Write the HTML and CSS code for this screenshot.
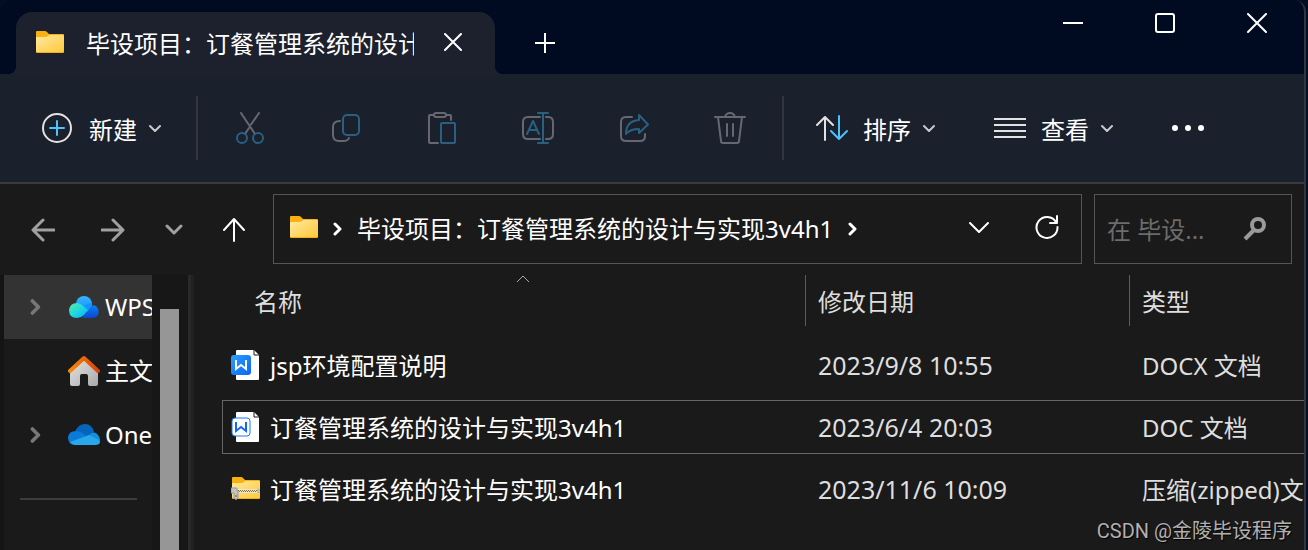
FILE: index.html
```html
<!DOCTYPE html>
<html lang="zh-CN">
<head>
<meta charset="utf-8">
<title>毕设项目：订餐管理系统的设计与实现3v4h1</title>
<link rel="stylesheet" href="styles.css">
</head>
<body>
<svg class="defs" aria-hidden="true">
  <defs>
    <linearGradient id="folder-front" x1="0" y1="0" x2="1" y2="1"><stop offset="0" stop-color="#ffe9a0"/><stop offset="1" stop-color="#ffc83a"/></linearGradient>
    <linearGradient id="blue" x1="0" y1="0" x2="1" y2="1"><stop offset="0" stop-color="#2ca0ff"/><stop offset="1" stop-color="#0a64f5"/></linearGradient>
    <linearGradient id="sky" x1="0" y1="0" x2="0" y2="1"><stop offset="0" stop-color="#35b4ff"/><stop offset="1" stop-color="#1590ff"/></linearGradient>
    <linearGradient id="deep" x1="0" y1="0" x2="0" y2="1"><stop offset="0" stop-color="#0a80f8"/><stop offset="1" stop-color="#0a48cc"/></linearGradient>
    <linearGradient id="teal" x1="0" y1="0" x2="1" y2="1"><stop offset="0" stop-color="#55f0a0"/><stop offset="0.500" stop-color="#20d8e0"/><stop offset="1" stop-color="#05a8ff"/></linearGradient>
    <linearGradient id="roof" x1="0" y1="0" x2="1" y2="0"><stop offset="0" stop-color="#f98a0c"/><stop offset="1" stop-color="#d84305"/></linearGradient>
    <linearGradient id="wall" x1="0" y1="0" x2="1" y2="1"><stop offset="0" stop-color="#e4e4e4"/><stop offset="1" stop-color="#a8a8a8"/></linearGradient>
    <symbol id="folder" viewBox="0 0 28 22"><path fill="#f9b011" d="M0 1Q0 0 1 0H9Q10 0 11 1L13 3H27Q28 3 28 4V21Q28 22 27 22H1Q0 22 0 21Z"/><path fill="url(#folder-front)" d="M0 7Q0 6 1 6H9Q11 6 12 5L13 4H27Q28 4 28 5V20Q28 21 27 21H1Q0 21 0 20Z"/></symbol>
    <symbol id="chev-down" viewBox="0 0 12 8"><path d="M1 2L6 7L11 2"/></symbol>
    <symbol id="chev-right" viewBox="0 0 10 14"><path d="M2 2L7 7L2 12"/></symbol>
  </defs>
</svg>
<div class="window">
  <header class="titlebar">
    <div class="tab">
      <svg class="folder"><use href="#folder"/></svg>
      <span class="tab-title">毕设项目：订餐管理系统的设计与实现3v4h1</span>
      <button class="plain" aria-label="关闭标签页"><svg class="ico white" width="18" height="18"><path d="M1 1L17 17M17 1L1 17"/></svg></button>
    </div>
    <button class="plain new-tab" aria-label="新标签页"><svg class="ico white" width="20" height="20"><path d="M0 10H20M10 0V20"/></svg></button>
    <div class="controls">
      <button class="plain" aria-label="最小化"><svg class="ico white" width="20" height="20"><path d="M0 10H20"/></svg></button>
      <button class="plain" aria-label="最大化"><svg class="ico white" width="20" height="20"><rect x="1" y="1" width="18" height="18" rx="2"/></svg></button>
      <button class="plain" aria-label="关闭"><svg class="ico white" width="20" height="20"><path d="M1 1L19 19M19 1L1 19"/></svg></button>
    </div>
  </header>

  <div class="toolbar">
    <button class="plain command new"><svg class="ico light" width="30" height="30"><circle cx="15" cy="15" r="14"/><path class="cyan" d="M8 15H22M15 8V22"/></svg><span>新建</span><svg class="ico light chev"><use href="#chev-down"/></svg></button>
    <span class="rule"></span>
    <div class="tools">
      <button class="plain" aria-label="剪切"><svg class="ico dim" width="32" height="32"><path d="M7 1L21 22M25 1L17 12.500M15 16L11 22"/><circle class="dimblue" cx="8" cy="26" r="5"/><circle class="dimblue" cx="24" cy="26" r="5"/></svg></button>
      <button class="plain" aria-label="复制"><svg class="ico dim" width="32" height="32"><path d="M10 9Q3 9 3 15V23Q3 29 9 29H13Q18 29 19 26"/><rect class="dimblue" x="13" y="3" width="16" height="20" rx="4"/></svg></button>
      <button class="plain" aria-label="粘贴"><svg class="ico dim" width="32" height="32"><path d="M8 3H4Q3 3 3 4V30Q3 31 4 31H12M20 3H24Q25 3 25 4V8"/><rect x="8" y="1" width="12" height="4" rx="2"/><rect class="dimblue" x="15" y="11" width="14" height="20" rx="1"/></svg></button>
      <button class="plain" aria-label="重命名"><svg class="ico dim" width="32" height="32"><path d="M18 5H6Q1 5 1 10V22Q1 27 6 27H18M24 5H26Q31 5 31 10V22Q31 27 26 27H24"/><path class="dimblue" d="M16 1H26M21 1V31M16 31H26M5 22L11 9L17 22M7 18H15"/></svg></button>
      <button class="plain" aria-label="共享"><svg class="ico dim" width="32" height="32"><path d="M14 5H8Q3 5 3 10V24Q3 29 8 29H22Q27 29 27 24V22"/><path class="dimblue" d="M21 3L30 12.500L21 21V17Q12 17 8 22Q8 9 21 8Z"/></svg></button>
      <button class="plain" aria-label="删除"><svg class="ico dim" width="32" height="32"><path d="M1 5H31M4 5L7 29Q7 31 9 31H23Q25 31 25 29L28 5M11 5Q12 1 16 1T21 5M13 12V24M19 12V24"/></svg></button>
    </div>
    <span class="rule"></span>
    <button class="plain command sort"><svg class="ico light" width="32" height="26"><path d="M1 10L9 2L17 10M9 2V25"/><path class="cyan" d="M15 16L23 24L31 16M23 24V1"/></svg><span>排序</span><svg class="ico light chev"><use href="#chev-down"/></svg></button>
    <button class="plain command view"><svg class="ico light" width="32" height="20"><path d="M0 1H32M0 7H32M0 13H32M0 19H32"/></svg><span>查看</span><svg class="ico light chev"><use href="#chev-down"/></svg></button>
    <button class="plain more" aria-label="更多"><svg width="32" height="6" fill="#fff"><circle cx="3" cy="3" r="3"/><circle cx="16" cy="3" r="3"/><circle cx="29" cy="3" r="3"/></svg></button>
  </div>

  <nav class="navbar">
    <div class="history">
      <button class="plain back" aria-label="后退"><svg class="ico gray" width="24" height="24"><path d="M2 12H23M12 2L2 12L12 22"/></svg></button>
      <button class="plain" aria-label="前进"><svg class="ico gray" width="24" height="24"><path d="M1 12H22M12 2L22 12L12 22"/></svg></button>
      <button class="plain" aria-label="最近的位置"><svg class="ico gray" width="18" height="12"><path d="M2 2L9 9L16 2"/></svg></button>
      <button class="plain" aria-label="上移"><svg class="ico white" width="22" height="24"><path d="M11 1V23M1 12L11 1L21 12"/></svg></button>
    </div>
    <div class="address">
      <svg class="folder"><use href="#folder"/></svg>
      <svg class="ico white crumb"><use href="#chev-right"/></svg>
      <span class="path">毕设项目：订餐管理系统的设计与实现3v4h1</span>
      <svg class="ico white crumb"><use href="#chev-right"/></svg>
      <button class="plain drop" aria-label="历史记录"><svg class="ico white" width="20" height="12"><path d="M1 2L10 11L19 2"/></svg></button>
      <button class="plain refresh" aria-label="刷新"><svg class="ico white" width="24" height="24"><path d="M21 7A10.500 10.500 0 1 0 22.500 12M22 1V8H15"/></svg></button>
    </div>
    <div class="search">
      <input type="text" aria-label="搜索" placeholder="在 毕设...">
      <button class="plain" aria-label="搜索"><svg width="24" height="24" fill="none" stroke="#9a9a9a" stroke-width="4"><circle cx="15" cy="8" r="6"/><path d="M11 13L2 22"/></svg></button>
    </div>
  </nav>

  <div class="content">
    <aside class="sidebar">
      <ul class="tree">
        <li class="selected"><svg class="ico branch"><use href="#chev-right"/></svg><svg width="32" height="32" viewBox="0 0 32 32"><circle cx="16" cy="13" r="8" fill="url(#sky)"/><path fill="url(#deep)" d="M14 27L22 16Q25 13 28 15Q32 19 30 24Q28 27 24 27Z"/><path fill="#1494ff" d="M15 15L22 12L24 14L19 21Z"/><path fill="url(#teal)" d="M9 27Q1 27 1 19Q2 12 9 12Q12 12 15 15L20 19L16 24Q13 27 9 27Z"/></svg><span>WPS云盘</span></li>
        <li><svg class="ico branch"></svg><svg width="32" height="32" viewBox="0 0 32 32"><path fill="url(#wall)" d="M16 5L30 17V29Q30 31 28 31H22Q20 31 20 29V21Q20 19 18 19H14Q12 19 12 21V29Q12 31 10 31H4Q2 31 2 29V17Z"/><path fill="none" stroke="url(#roof)" stroke-width="4" stroke-linejoin="round" stroke-linecap="round" d="M2 16L16 3L30 16"/></svg><span>主文件夹</span></li>
        <li><svg class="ico branch"><use href="#chev-right"/></svg><svg width="32" height="32" viewBox="0 0 32 32"><path fill="#0764bc" d="M7 13Q10 5 17 5Q24 5 26 13L20 20Z"/><path fill="#0a7bd8" d="M6 26Q0 25 0 18Q1 12 8 12Q12 12 20 18L8 26Z"/><path fill="#1490df" d="M20 17Q24 12 28 14Q32 17 32 22Z"/><path fill="#28a8ea" d="M2 23L21 16L31 21Q33 23 31 25Q30 26 27 26H7Q4 26 2 23Z"/></svg><span>OneDrive</span></li>
      </ul>
      <div class="divider"></div>
    </aside>
    <div class="scrollbar"><div class="thumb"></div></div>
    <main class="files">
      <svg class="sort-mark" width="14" height="8"><path d="M1 7L7 1L13 7"/></svg>
      <table>
        <thead><tr><th>名称</th><th>修改日期</th><th>类型</th></tr></thead>
        <tbody>
          <tr><td class="name"><svg width="30" height="32" viewBox="0 0 30 32"><path fill="#fff" d="M5 2Q5 1 6 1H23L28 6V30Q28 31 27 31H6Q5 31 5 30Z"/><path d="M23 1V6H28" fill="none" stroke="#1a1a1a"/><rect y="6" width="20" height="20" rx="3" fill="url(#blue)"/><path d="M5 11V20L10 16L15 20V11" fill="none" stroke="#fff" stroke-width="2"/></svg><span>jsp环境配置说明</span></td><td class="date">2023/9/8 10:55</td><td>DOCX 文档</td></tr>
          <tr class="focused"><td class="name"><svg width="30" height="32" viewBox="0 0 30 32"><path fill="#fff" d="M5 2Q5 1 6 1H23L28 6V30Q28 31 27 31H6Q5 31 5 30Z"/><path d="M23 1V6H28" fill="none" stroke="#1a1a1a"/><rect x="1" y="7" width="18" height="18" rx="3" fill="#fff" stroke="#1677ff"/><path d="M5 11V20L10 16L15 20V11" fill="none" stroke="#1268f5" stroke-width="2"/></svg><span>订餐管理系统的设计与实现3v4h1</span></td><td class="date">2023/6/4 20:03</td><td>DOC 文档</td></tr>
          <tr><td class="name"><svg width="30" height="32" viewBox="0 0 30 32"><svg x="1" y="4" width="28" height="22"><use href="#folder"/></svg><path d="M7 18H28" stroke="#efe6c4" stroke-width="4"/><path d="M7 17.500H26" stroke="#7a7050" stroke-width="1" stroke-dasharray="1 1"/><path d="M8 18.500H26" stroke="#7a7050" stroke-width="1" stroke-dasharray="1 1"/><path d="M0 15H6V18H7V25Q5 28 3 25V20H0Z" fill="#c4c4c4" stroke="#999"/><path d="M5 22V24" stroke="#555"/><rect x="26" y="16" width="3" height="4" fill="#bbb"/></svg><span>订餐管理系统的设计与实现3v4h1</span></td><td class="date">2023/11/6 10:09</td><td>压缩(zipped)文件夹</td></tr>
        </tbody>
      </table>
    </main>
  </div>
</div>
<div class="watermark">CSDN @金陵毕设程序</div>
</body>
</html>
```
FILE: styles.css
```css
* { box-sizing: border-box; }
body {
  margin: 0;
  height: 100vh;
  overflow: hidden;
  background: #040d22;
  color: #fff;
  font: 24px/32px "Noto Sans", "Noto Sans CJK SC", sans-serif;
}
.defs { position: absolute; width: 0; height: 0; }
.window {
  height: 100%;
  margin-right: 2px;
  display: flex;
  flex-direction: column;
  overflow: hidden;
  background: #1a1a1a;
  border-right: 2px solid #2e3642;
  border-radius: 12px 12px 0 0;
}
.plain {
  display: flex;
  align-items: center;
  justify-content: center;
  padding: 0;
  border: 0;
  background: none;
  color: inherit;
  font: inherit;
}
svg { flex: none; display: block; }
.ico { fill: none; stroke-width: 2; stroke-linecap: round; stroke-linejoin: round; }
.white { stroke: #fff; }
.light { stroke: #e2e2e2; }
.gray { stroke: #a0a0a0; stroke-width: 3; }
.dim { stroke: #656871; }
.cyan { stroke: #4cc2ff; }
.dimblue { stroke: #2a5f80; }
.folder { width: 28px; height: 22px; }

.titlebar { flex: none; height: 74px; display: flex; background: #000a21; padding-left: 16px; }
.tab {
  position: relative;
  width: 479px;
  margin-top: 12px;
  padding: 0 33px 2px 20px;
  display: flex;
  align-items: center;
  background: #1c212d;
  border-radius: 16px 16px 0 0;
}
.tab::before, .tab::after { content: ""; position: absolute; bottom: 0; width: 8px; height: 8px; }
.tab::before { right: 100%; background: radial-gradient(circle at 0 0, transparent 8px, #1c212d 8px); }
.tab::after { left: 100%; background: radial-gradient(circle at 100% 0, transparent 8px, #1c212d 8px); }
.tab-title { flex: 1; margin: 4px 30px 0 22px; overflow: hidden; white-space: nowrap; }
.new-tab { width: 100px; padding-top: 12px; }
.controls { margin-left: auto; display: flex; height: 46px; padding-right: 1px; }
.controls button { width: 92px; }

.toolbar { flex: none; height: 110px; display: flex; align-items: center; background: #1b202d; border-bottom: 2px solid #3a3a3a; }
.command span { padding-top: 3px; }
.chev { width: 12px; height: 8px; margin-left: 12px; stroke: #c8c8c8; }
.new { padding: 0 35px 0 42px; }
.new span { margin-left: 17px; }
.rule { flex: none; width: 2px; height: 64px; background: #303541; }
.tools { display: flex; padding: 0 4px; }
.tools button { width: 96px; height: 64px; }
.sort { padding-left: 32px; }
.sort span, .view span { margin-left: 15px; }
.view { padding-left: 59px; }
.more { margin-left: 59px; }

.navbar { flex: none; height: 91px; padding: 10px 12px 0 0; display: flex; gap: 12px; align-items: flex-start; }
.history { flex: none; display: flex; gap: 40px; height: 70px; padding: 2px 0 0 31px; width: 261px; }
.back { margin-right: 6px; }
.address { flex: 1; min-width: 0; height: 70px; display: flex; align-items: center; border: 1px solid #555; padding: 0 22px 4px 16px; }
.crumb { width: 10px; height: 14px; margin: 4px 0 0 15px; stroke-width: 3; }
.path { margin-left: 14px; padding-top: 4px; white-space: nowrap; }
.drop { margin-left: auto; width: 20px; height: 32px; }
.refresh { margin-left: 46px; width: 24px; height: 32px; }
.search { width: 198px; height: 70px; display: flex; align-items: center; border: 1px solid #555; padding: 0 24px 0 12px; }
.search input { flex: 1; min-width: 0; height: 40px; padding: 0; border: 0; background: none; color: #fff; font: inherit; outline: 0; }
.search input::placeholder { color: #6c6c6c; }

.content { flex: 1; min-height: 0; display: flex; }
.sidebar { flex: none; width: 152px; padding-left: 4px; overflow: hidden; background: linear-gradient(90deg, #141414 4px, #1a1a1a 4px); }
.tree { list-style: none; margin: 0; padding: 0; }
.tree li { height: 64px; padding-left: 26px; display: flex; align-items: center; white-space: nowrap; }
.tree .selected { background: #333; }
.branch { width: 12px; height: 18px; margin-right: 26px; stroke: #777; stroke-width: 3; }
.tree span { margin-left: 5px; }
.divider { height: 2px; margin: 31px 15px 0 16px; background: #3d3d3d; }
.scrollbar { flex: none; width: 42px; padding: 34px 12px 0 8px; border-right: 3px solid #212121; display: flex; box-shadow: inset -3px 0 #292929; background: #171717; }
.thumb { flex: 1; background: #969696; }

.files { position: relative; flex: 1; min-width: 0; padding-left: 28px; overflow: hidden; }
.sort-mark { position: absolute; left: 322px; top: 0; fill: none; stroke: #aaa; }
table, thead { display: block; }
tbody { display: flex; flex-direction: column; gap: 8px; }
tr { display: grid; grid-template-columns: 583px 324px minmax(0, 1fr); border: 1px solid transparent; border-right: 0; }
thead tr { border-width: 0; height: 51px; margin-bottom: 12px; }
th { padding: 11px 0 0 12px; text-align: left; font-weight: 400; color: #dedede; border-left: 1px solid #5c5c5c; white-space: nowrap; }
th:first-child { padding-left: 32px; border-left: 0; }
td { height: 52px; padding: 2px 0 0 12px; display: flex; align-items: center; color: #dedede; white-space: nowrap; }
.date { padding-top: 0; font-size: 25px; }
.name { padding: 0 0 0 8px; color: #fff; gap: 9px; }
.name span { padding-top: 2px; }
.focused { border-color: #666; }

.watermark { position: absolute; right: 16px; bottom: 5px; color: #b0b0b0; font: 20px/28px Roboto, "Noto Sans CJK SC", sans-serif; text-shadow: 1px 1px 1px #000; }
```
